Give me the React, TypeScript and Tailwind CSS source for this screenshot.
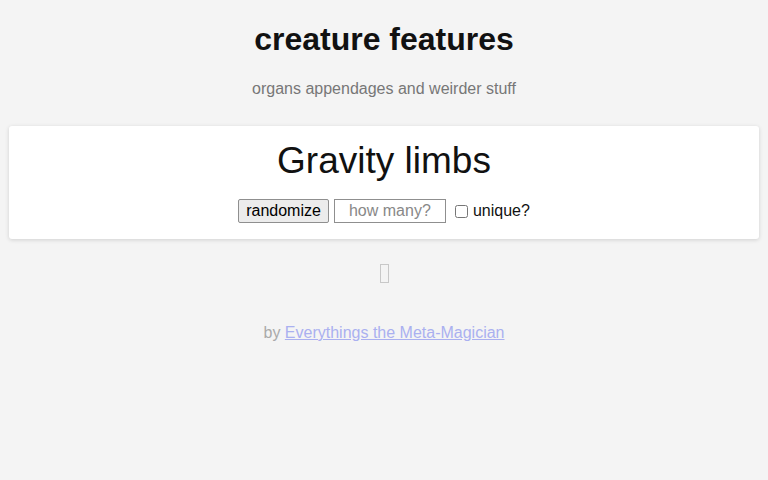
import { useState } from 'react'

export default function App() {
  const [unique, setUnique] = useState(false)

  return (
    <div className="min-h-[480px] bg-[#f4f4f4] text-center font-['Liberation_Sans',Arial,sans-serif] text-[#111]">
      <header className="pt-[18px]">
        <h1 className="text-[32px] font-bold leading-[42px]">creature features</h1>
        <p className="mt-[19px] text-[16px] leading-[20px] text-[#777]">organs appendages and weirder stuff</p>
      </header>

      {/* generator card */}
      <section className="mx-[9px] mt-[27px] rounded-[3px] bg-white pt-[14px] pb-[16px] shadow-[0_1px_4px_rgba(0,0,0,0.15)]">
        <h2 className="text-[37px] leading-[42px]">Gravity limbs</h2>
        <div className="mt-[17px] flex items-center justify-center text-[16px]">
          <button className="h-[24px] rounded-[2px] border border-[#8f8f8f] bg-[#ececec] px-[7px] leading-[20px] text-black">
            randomize
          </button>
          <input
            placeholder="how many?"
            className="ml-[5px] h-[24px] w-[112px] border border-[#8f8f8f] bg-white px-[2px] text-center text-[16px] placeholder:text-[#888]"
          />
          <label className="ml-[9px] flex items-center">
            <input
              type="checkbox"
              checked={unique}
              onChange={e => setUnique(e.target.checked)}
              className="m-0 h-[13px] w-[13px]"
            />
            <span className="ml-[5px] leading-[20px]">unique?</span>
          </label>
        </div>
      </section>

      {/* result placeholder glyph */}
      <div className="mt-[22px] flex h-[24px] justify-center">
        <span className="mt-[3px] inline-block h-[19px] w-[9px] border border-[#c8c8c8]" />
      </div>

      <p className="mt-[38px] text-[16px] leading-[20px] text-[#aaa]">
        by{' '}
        <a href="#" className="text-[#aab0f0] underline">
          Everythings the Meta-Magician
        </a>
      </p>
    </div>
  )
}
